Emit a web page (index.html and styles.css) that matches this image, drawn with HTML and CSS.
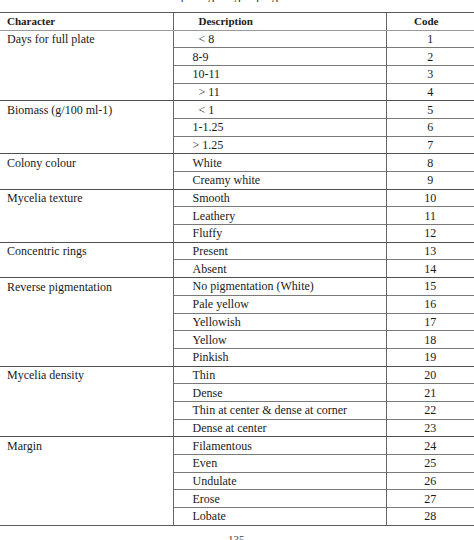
FILE: index.html
```html
<!DOCTYPE html>
<html>
<head>
<meta charset="utf-8">
<link rel="stylesheet" href="styles.css">
</head>
<body>
<div class="caption">Morphological grouping</div>
<table class="grid">
  <colgroup><col class="c1"><col class="c2"><col class="c3"></colgroup>
  <thead>
    <tr><th class="h1">Character</th><th class="h2">Description</th><th class="h3">Code</th></tr>
  </thead>
  <tbody>
    <tr class="grp"><td class="ch" rowspan="4">Days for full plate</td><td class="ds ind">&lt; 8</td><td class="cd">1</td></tr>
    <tr><td class="ds">8-9</td><td class="cd">2</td></tr>
    <tr><td class="ds">10-11</td><td class="cd">3</td></tr>
    <tr><td class="ds ind">&gt; 11</td><td class="cd">4</td></tr>

    <tr class="grp"><td class="ch" rowspan="3">Biomass (g/100 ml-1)</td><td class="ds ind">&lt; 1</td><td class="cd">5</td></tr>
    <tr><td class="ds">1-1.25</td><td class="cd">6</td></tr>
    <tr><td class="ds">&gt; 1.25</td><td class="cd">7</td></tr>

    <tr class="grp"><td class="ch" rowspan="2">Colony colour</td><td class="ds">White</td><td class="cd">8</td></tr>
    <tr><td class="ds">Creamy white</td><td class="cd">9</td></tr>

    <tr class="grp"><td class="ch" rowspan="3">Mycelia texture</td><td class="ds">Smooth</td><td class="cd">10</td></tr>
    <tr><td class="ds">Leathery</td><td class="cd">11</td></tr>
    <tr><td class="ds">Fluffy</td><td class="cd">12</td></tr>

    <tr class="grp"><td class="ch" rowspan="2">Concentric rings</td><td class="ds">Present</td><td class="cd">13</td></tr>
    <tr><td class="ds">Absent</td><td class="cd">14</td></tr>

    <tr class="grp"><td class="ch" rowspan="5">Reverse pigmentation</td><td class="ds">No pigmentation (White)</td><td class="cd">15</td></tr>
    <tr><td class="ds">Pale yellow</td><td class="cd">16</td></tr>
    <tr><td class="ds">Yellowish</td><td class="cd">17</td></tr>
    <tr><td class="ds">Yellow</td><td class="cd">18</td></tr>
    <tr><td class="ds">Pinkish</td><td class="cd">19</td></tr>

    <tr class="grp"><td class="ch" rowspan="4">Mycelia density</td><td class="ds">Thin</td><td class="cd">20</td></tr>
    <tr><td class="ds">Dense</td><td class="cd">21</td></tr>
    <tr><td class="ds">Thin at center &amp; dense at corner</td><td class="cd">22</td></tr>
    <tr><td class="ds">Dense at center</td><td class="cd">23</td></tr>

    <tr class="grp"><td class="ch" rowspan="5">Margin</td><td class="ds">Filamentous</td><td class="cd">24</td></tr>
    <tr><td class="ds">Even</td><td class="cd">25</td></tr>
    <tr><td class="ds">Undulate</td><td class="cd">26</td></tr>
    <tr><td class="ds">Erose</td><td class="cd">27</td></tr>
    <tr><td class="ds">Lobate</td><td class="cd">28</td></tr>
  </tbody>
</table>
<div class="pagenum">135</div>
</body>
</html>
```
FILE: styles.css
```css
html, body {
  margin: 0;
  padding: 0;
  background: #ffffff;
  overflow: hidden;
}
body {
  width: 474px;
  height: 540px;
  font-family: "Liberation Serif", "Times New Roman", serif;
  color: #1a1a1a;
}
.caption {
  height: 12px;
  line-height: 12px;
  font-size: 12px;
  margin-top: -10px;
  padding-left: 160px;
  white-space: nowrap;
  overflow: hidden;
  color: #222;
}
.grid {
  margin-top: 10px;
  width: 474px;
  border-collapse: collapse;
  table-layout: fixed;
  border-top: 1.5px solid #5a5a5a;
  border-bottom: 1.5px solid #5a5a5a;
}
.c1 { width: 173px; }
.c2 { width: 213px; }
.c3 { width: 88px; }
th {
  font-size: 11px;
  font-weight: bold;
  height: 16.5px;
  padding: 0;
  line-height: 13px;
  text-align: left;
  border-bottom: 1.5px solid #9a9a9a;
}
.h1 { padding-left: 7px; }
.h2 { padding-left: 25px; border-left: 1px solid #666; }
.h3 { text-align: center; padding-right: 8px; border-left: 1px solid #666; }
td {
  font-size: 12px;
  height: 16.7px;
  padding: 0;
  line-height: 14px;
  white-space: nowrap;
  border-top: 1px solid #7a7a7a;
}
.ch {
  vertical-align: top;
  padding-left: 7px;
  padding-top: 1.5px;
}
.ds {
  padding-left: 19px;
  border-left: 1px solid #666;
}
.ds.ind { padding-left: 25px; }
.cd {
  text-align: center;
  border-left: 1px solid #666;
}
.grp td {
  border-top: 1px solid #505050;
}
.pagenum {
  margin-top: 7px;
  padding-left: 228px;
  font-size: 11px;
  line-height: 12px;
  color: #444;
}
```
